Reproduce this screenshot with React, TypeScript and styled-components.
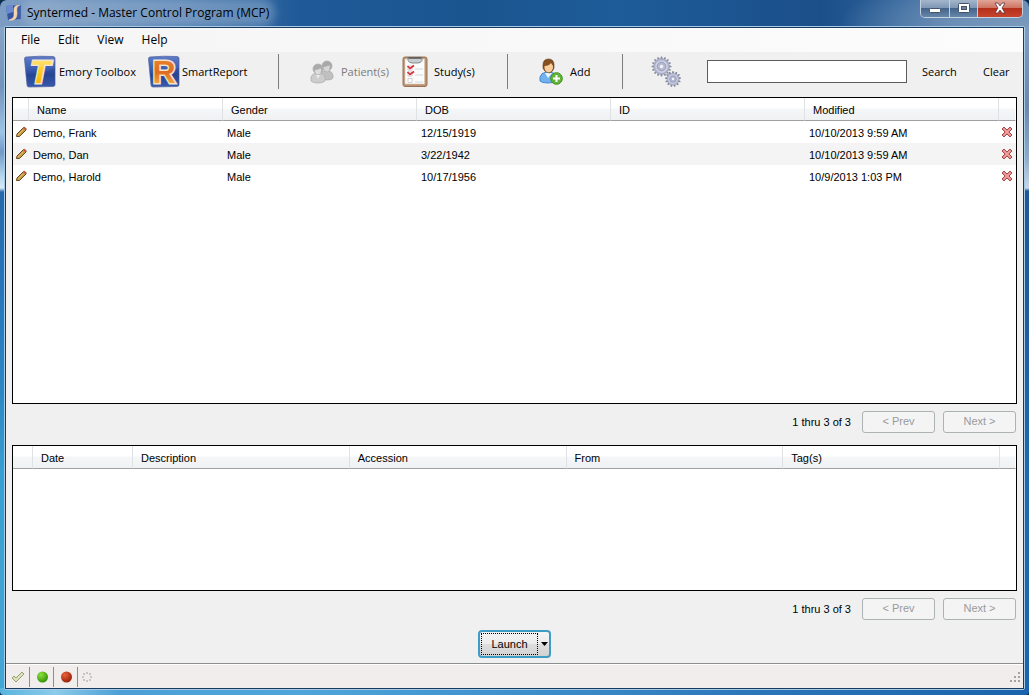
import React from "react";
import styled, { createGlobalStyle } from "styled-components";

const GlobalStyle = createGlobalStyle`
  * { box-sizing: border-box; }
  body { margin: 0; background: #0c2c50; }
  button, input { font: inherit; color: inherit; }
`;

const uiFont = `"Open Sans", "Noto Sans", sans-serif`;
const gridFont = `"Liberation Sans", Arial, sans-serif`;

const Frame = styled.div`
  min-height: 100vh;
  display: flex;
  flex-direction: column;
  overflow: hidden;
  border-radius: 7px 7px 4px 4px;
  color: #000;
  font-family: ${uiFont};
  font-size: 11px;
  line-height: 16px;
  background:
    linear-gradient(90deg, #58b4de 0, #8ccbea 55px, #4b9fd6 120px, #4fa5da 300px, #3d8fcc 520px, #2a74b8 75%, #1b63ac 100%) bottom / 100% 7px no-repeat,
    linear-gradient(180deg, #7f9dbf 0, #6b89ad 80px, #8fa9c8 130px, #c9d6e6 161px, #1f5796 164px, #215c9e 300px, #2069ae 450px, #1d63ab 100%) right 27px / 6px 100% no-repeat,
    linear-gradient(180deg, #88a4c6 0, #7393bb 60px, #9cc4e6 105px, #7199c6 125px, #b7d8ef 150px, #d6eaf7 161px, #2568ac 165px, #2574b8 250px, #2b86c4 360px, #37a0d2 450px, #45a8d6 100%) left 27px / 6px 100% no-repeat,
    radial-gradient(ellipse 190px 60px at 100% 100%, #7b9abd 0, #6c8fb6 40%, rgba(60, 106, 157, 0) 100%) top / 100% 27px no-repeat,
    linear-gradient(90deg, #7c9cc3 0, #6d91bc 60px, #4d7bb0 180px, #1f5997 300px, #1b5590 480px, #1d5c98 620px, #1b4f8a 820px, #2f6299 900px, #5f86b0 100%);
`;

const TitleBar = styled.header`
  height: 26px;
  display: flex;
  align-items: flex-start;
  padding: 0 6px;
`;

const TitleText = styled.h1`
  margin: 5px 0 0 5px;
  flex: 1;
  font-size: 12px;
  font-weight: 400;
  line-height: 16px;

  span {
    background: rgba(178, 199, 222, 0.38);
    box-shadow: 0 0 8px 6px rgba(178, 199, 222, 0.38);
    border-radius: 8px;
  }
`;

const TitleIcon = styled.svg`
  margin-top: 5px;
`;

const WindowControls = styled.div`
  display: flex;
  height: 18px;
  border: 1px solid #c3d1e0;
  border-top: 0;
  border-radius: 0 0 5px 5px;
  overflow: hidden;
`;

const ControlButton = styled.button<{ $close?: boolean }>`
  width: ${(p) => (p.$close ? 45 : 28)}px;
  padding: 0 0 2px;
  border: 0;
  display: flex;
  justify-content: center;
  align-items: center;
  background: ${(p) =>
    p.$close
      ? "linear-gradient(180deg, #e0a597 0, #cf7563 45%, #b5301b 50%, #c8442c 100%)"
      : "linear-gradient(180deg, #a4b6cb 0, #7f98b5 45%, #45648a 50%, #6686aa 100%)"};

  & + & {
    border-left: 1px solid #c3d1e0;
  }
`;

const Client = styled.div`
  flex: 1;
  display: flex;
  margin: 0 4px 5px;
  border: 1px solid #a9cbe6;
  border-radius: 2px;
`;

const ClientBody = styled.div`
  flex: 1;
  min-width: 0;
  display: flex;
  flex-direction: column;
  border: 1px solid #173a61;
  background: #f0f0f0;
`;

const MenuBar = styled.nav`
  height: 24px;
  display: flex;
  align-items: center;
  padding-left: 6px;
  background: linear-gradient(90deg, #f5f5f5, #fcfcfc);
`;

const MenuItem = styled.button`
  padding: 0 9px;
  border: 0;
  background: none;
  font-size: 12px;
`;

const Toolbar = styled.div`
  height: 45px;
  display: flex;
  align-items: center;
  padding: 0 0 6px 18px;
`;

const ToolButton = styled.button<{ $width: number; $gap: number }>`
  width: ${(p) => p.$width}px;
  flex: none;
  display: flex;
  align-items: center;
  gap: ${(p) => p.$gap}px;
  padding: 0;
  border: 0;
  background: none;
  white-space: nowrap;

  &:disabled { color: #7b7b7b; }
`;

const LogoSvg = styled.svg`
  flex: none;
  overflow: visible;
`;

const TextButton = styled.button<{ $width: number }>`
  width: ${(p) => p.$width}px;
  flex: none;
  padding: 0;
  border: 0;
  background: none;
  text-align: left;
`;

const ToolDivider = styled.span<{ $after: number }>`
  width: 1px;
  height: 35px;
  margin-right: ${(p) => p.$after}px;
  background: #7d7d7d;
`;

const SearchInput = styled.input`
  flex: 1;
  min-width: 60px;
  height: 23px;
  margin-right: 15px;
  padding: 0 4px;
  border: 1px solid #5c5c5c;
  background: #fff;
`;

const Panel = styled.section<{ $fill?: boolean }>`
  flex: ${(p) => (p.$fill ? "1 0 auto" : "none")};
  min-height: 146px;
  margin: 0 6px;
  border: 1px solid #000;
  background: #fff;
  font-family: ${gridFont};
`;

const Grid = styled.table`
  width: 100%;
  table-layout: fixed;
  border-collapse: separate;
  border-spacing: 0;

  th, td {
    text-align: left;
    font-weight: 400;
    white-space: nowrap;
  }
  th {
    height: 23px;
    padding: 1px 8px 0;
    border-right: 1px solid #dfe2e5;
    border-bottom: 1px solid #a0a0a0;
    background: linear-gradient(180deg, #fff 0, #fff 45%, #f5f6f8 50%, #eff1f3 100%);
  }
  th:last-child { border-right-color: #fff; }
  td {
    height: 22px;
    padding: 1px 4px 0;
  }
  tbody tr:nth-child(even) { background: #f4f4f4; }
`;

const IconCell = styled.td`
  && { padding: 0 2px; }
`;

const RowButton = styled.button`
  display: block;
  padding: 0;
  border: 0;
  background: none;

  svg { display: block; }
`;

const Pager = styled.div<{ $height: number }>`
  height: ${(p) => p.$height}px;
  display: flex;
  justify-content: flex-end;
  align-items: flex-start;
  gap: 8px;
  padding: 7px 7px 0;
  font-family: ${gridFont};
  line-height: 22px;

  span { margin-right: 3px; }
`;

const PagerButton = styled.button`
  width: 73px;
  height: 22px;
  padding: 0 0 2px;
  border: 1px solid #adb2b5;
  border-radius: 3px;
  background: #f4f4f4;
  line-height: 16px;

  &:disabled { color: #9a9a9a; }
`;

const LaunchRow = styled.div`
  display: flex;
  justify-content: center;
  padding-bottom: 5px;
  font-family: ${gridFont};
`;

const SplitButton = styled.div`
  width: 73px;
  height: 28px;
  display: flex;
  padding: 1px;
  border: 2px solid #3f9cc4;
  border-radius: 4px;
  background: linear-gradient(180deg, #f4f4f4 0, #ececec 48%, #dedede 52%, #d2d2d2 100%);
`;

const LaunchButton = styled.button`
  flex: 1;
  padding: 0;
  border: 1px dotted #000;
  background: none;
`;

const DropButton = styled.button`
  width: 10px;
  padding: 0 0 0 2px;
  border: 0;
  background: none;
  display: flex;
  justify-content: center;
  align-items: center;
`;

const StatusBar = styled.footer`
  height: 25px;
  display: flex;
  align-items: center;
  padding: 1px 2px 0 0;
  border-top: 1px solid #8b8f90;
  box-shadow: inset 0 1px #fff;
  background: #f0edec;
`;

const StatusItem = styled.span<{ $last?: boolean }>`
  width: ${(p) => (p.$last ? 18 : 24)}px;
  height: 20px;
  display: flex;
  justify-content: center;
  align-items: center;
  border-right: ${(p) => (p.$last ? "0" : "1px solid #8e8e8e")};
`;

const StatusSpacer = styled.span`
  flex: 1;
`;

function AppIcon() {
  return (
    <TitleIcon width="16" height="16" viewBox="0 0 16 16" aria-hidden="true">
      <path d="M0 1 15 0v14L2 15z" fill="#3554a0" />
      <path d="M0 1 7 0v7L1 9z" fill="#6b8bd0" />
      <path d="M14 0C7 0 8 4 8 8s0 5-5 7c7 1 8-3 8-7s-1-6 3-8z" fill="#f8d5a8" stroke="#f8d5a8" strokeWidth=".6" />
    </TitleIcon>
  );
}

function LogoTile({ letter, colors, id }: { letter: string; colors: string[]; id: string }) {
  return (
    <LogoSvg width="32" height="32" viewBox="0 0 32 32" aria-hidden="true">
      <defs>
        <linearGradient id={id + "b"} x1="0" y1="0" x2="0" y2="1">
          <stop offset="0" stopColor="#5f7cc6" />
          <stop offset=".4" stopColor="#3c5db2" />
          <stop offset=".6" stopColor="#2b4899" />
          <stop offset="1" stopColor="#4567bd" />
        </linearGradient>
        <linearGradient id={id + "l"} x1="0" y1="0" x2="0" y2="1">
          <stop offset="0" stopColor={colors[0]} />
          <stop offset=".5" stopColor={colors[1]} />
          <stop offset="1" stopColor={colors[2]} />
        </linearGradient>
      </defs>
      <path d="M2 1Q16-.3 29 .500q2 0 2 2v26q0 2-2 2L5 31q-2 0-2-2L.500 3Q.500 1 2 1z" fill={`url(#${id}b)`} stroke="#4a5f9c" strokeWidth=".7" />
      <path d="M2 18Q16 19 31 12v17q0 1-1 1H5q-1 0-1-1z" fill="#1f3b88" opacity=".3" />
      <text
        x="16"
        y="27"
        textAnchor="middle"
        fontFamily="Liberation Sans, Arial, sans-serif"
        fontSize="32"
        fontWeight="700"
        fontStyle={letter === "T" ? "italic" : "normal"}
        fill={`url(#${id}l)`}
        stroke="#f1e3cc"
        strokeWidth="3"
        paintOrder="stroke"
      >
        {letter}
      </text>
    </LogoSvg>
  );
}

function PatientsIcon() {
  return (
    <svg width="24" height="24" viewBox="0 0 24 24" aria-hidden="true">
      <g stroke="#b0b0b0" strokeWidth=".8">
        <path d="M10 19v-4q1-4 5-4h3q4 0 5 4v3q-1 2-6 2z" fill="#c0c0c0" />
        <circle cx="17" cy="6" r="5" fill="#a8a8a8" />
        <path d="M13 7q4-1 7-2v3q0 4-3 4t-4-4z" fill="#d6d6d6" />
        <path d="M1 21v-4q1-3 5-4h4q4 1 5 4v4q-2 2-7 2t-7-2z" fill="#cdcdcd" />
        <circle cx="8" cy="9" r="5" fill="#ababab" />
        <path d="M4.500 10q4-1 7-2v3q0 4-3.500 4t-3.500-4z" fill="#dcdcdc" />
      </g>
      <path d="m6 15 2 4 2-4z" fill="#ececec" />
    </svg>
  );
}

function StudyIcon() {
  return (
    <svg width="26" height="32" viewBox="0 0 26 32" aria-hidden="true">
      <rect x="1" y="1" width="24" height="29.500" rx="2" fill="#bd9270" stroke="#9b7253" />
      <rect x="3" y="3" width="19.500" height="25" fill="#fbfbfb" stroke="#d8cabb" strokeWidth=".6" />
      <path d="M6 1.500h14v3q-1 2.500-4 2.500h-6Q7 7 6 4.500z" fill="#c9cccd" stroke="#74787a" strokeWidth=".8" />
      <path d="M6.500 2h13" stroke="#505456" strokeWidth="1.500" />
      <path d="M13 13h8M13 19h8M13 26h8" stroke="#d5d8da" />
      <path d="M6 10h4v4H6zM6 16h4v4H6zM6 22.500h4v4H6z" fill="#fff" stroke="#c4c4c4" strokeWidth=".8" />
      <path d="m5.500 10 2.500 2.500 4-3M5.500 16l2.500 2.500 4-3" fill="none" stroke="#d92b35" strokeWidth="1.600" />
    </svg>
  );
}

function AddIcon() {
  return (
    <svg width="24" height="28" viewBox="0 0 24 28" aria-hidden="true">
      <path d="M1 23v-4q1-4 6-5h4q6 1 7 5v4q-3 2-9 2t-8-2z" fill="#72b1ee" stroke="#4b8ad0" />
      <path d="m6 15 3 5 4-5z" fill="#eaf5ff" />
      <path d="M4 7q0-6 5.500-6T15 7v3q-1 4-5 5-5-1-6-5z" fill="#85501f" stroke="#65380f" strokeWidth=".6" />
      <path d="M5.500 8q4.500 0 6.500-3l2 3v2q-1 4-4.500 4.500-3.500-.500-4-4.500z" fill="#f8cf9c" />
      <circle cx="17.500" cy="20.500" r="5.800" fill="#62b534" stroke="#3f8e1c" />
      <path d="M17.500 17v7M14 20.500h7" stroke="#fff" strokeWidth="2" />
    </svg>
  );
}

function Gear({ cx, cy, r, teeth }: { cx: number; cy: number; r: number; teeth: number }) {
  const step = 360 / teeth;
  return (
    <g transform={`translate(${cx} ${cy})`}>
      {Array.from({ length: teeth }, (_, i) => (
        <path key={i} d={`M-1.300 ${-r + 1}L-.500 ${-r - 1.5}h1l.8 2.500z`} fill="#8489a0" transform={`rotate(${i * step})`} />
      ))}
      <circle r={r - 0.5} fill="#a9aec5" />
      <circle r={r * 0.75} fill="#cdd0e4" />
      <circle r={r * 0.5} fill="#b4b8d2" stroke="#9a9fba" strokeWidth="1" />
      <circle r={r * 0.26} fill="#f2f2f6" stroke="#a3a8c0" strokeWidth=".6" />
    </g>
  );
}

function GearsIcon() {
  return (
    <svg width="32" height="32" viewBox="0 0 32 32" aria-hidden="true">
      <Gear cx={10.5} cy={10.5} r={8.5} teeth={16} />
      <Gear cx={22} cy={23} r={6.5} teeth={13} />
    </svg>
  );
}

function PencilIcon() {
  return (
    <svg width="12" height="12" viewBox="0 0 12 12" aria-hidden="true">
      <path d="M1.500 10.500 2 8l6.500-6.500q1-.500 2 .500t.500 2L4.500 10.500z" fill="#c89a45" stroke="#664a20" />
      <path d="M3 9l5-5" stroke="#e3bd6c" />
      <path d="m8 2 1-1 2 2-1 1z" fill="#d9523c" />
    </svg>
  );
}

function DeleteIcon() {
  return (
    <svg width="12" height="12" viewBox="0 0 12 12" aria-hidden="true">
      <path
        d="m3 1 3 3 3-3 2 2-3 3 3 3-2 2-3-3-3 3-2-2 3-3-3-3z"
        fill="#e98f8f"
        stroke="#a84848"
        strokeLinejoin="round"
      />
      <path d="M3 3l6 6M9 3 3 9" stroke="#eea09c" />
    </svg>
  );
}

function CheckIcon() {
  return (
    <svg width="14" height="14" viewBox="0 0 14 14" aria-hidden="true">
      <path d="m1 8 2-2 2 2 6-6 2 2-8 8z" fill="#dbe3b4" stroke="#99a276" strokeLinejoin="round" />
    </svg>
  );
}

function Ball({ id, light, dark }: { id: string; light: string; dark: string }) {
  return (
    <svg width="12" height="12" viewBox="0 0 12 12" aria-hidden="true">
      <radialGradient id={id} cx=".35" cy=".3" r=".75">
        <stop offset="0" stopColor={light} />
        <stop offset="1" stopColor={dark} />
      </radialGradient>
      <circle cx="6.500" cy="6" r="5.500" fill={`url(#${id})`} />
    </svg>
  );
}

function SpinnerIcon() {
  return (
    <svg width="12" height="12" viewBox="0 0 12 12" aria-hidden="true">
      <path
        d="M5 1h2v2H5zM8 2h2v2H8zM9 5h2v2H9zM8 8h2v2H8zM5 9h2v2H5zM2 8h2v2H2zM1 5h2v2H1zM2 2h2v2H2z"
        fill="#c8c6c5"
      />
    </svg>
  );
}

function GripIcon() {
  return (
    <svg width="12" height="12" viewBox="0 0 12 12" aria-hidden="true">
      <path d="M9 1h2v2H9zM5 5h2v2H5zM9 5h2v2H9zM1 9h2v2H1zM5 9h2v2H5zM9 9h2v2H9z" fill="#a3a3a3" />
    </svg>
  );
}

const patients = [
  { name: "Demo, Frank", gender: "Male", dob: "12/15/1919", id: "", modified: "10/10/2013 9:59 AM" },
  { name: "Demo, Dan", gender: "Male", dob: "3/22/1942", id: "", modified: "10/10/2013 9:59 AM" },
  { name: "Demo, Harold", gender: "Male", dob: "10/17/1956", id: "", modified: "10/9/2013 1:03 PM" },
];

function PageControls({ height }: { height: number }) {
  return (
    <Pager $height={height}>
      <span>1 thru 3 of 3</span>
      <PagerButton disabled>&lt; Prev</PagerButton>
      <PagerButton disabled>Next &gt;</PagerButton>
    </Pager>
  );
}

export default function App() {
  return (
    <>
      <GlobalStyle />
      <Frame>
        <TitleBar>
          <AppIcon />
          <TitleText>
            <span>Syntermed - Master Control Program (MCP)</span>
          </TitleText>
          <WindowControls>
            <ControlButton aria-label="Minimize">
              <svg width="14" height="14" viewBox="0 0 14 14">
                <rect x="1.500" y="7.500" width="11" height="4" rx="1" fill="#fff" stroke="#42536a" />
              </svg>
            </ControlButton>
            <ControlButton aria-label="Maximize">
              <svg width="14" height="14" viewBox="0 0 14 14">
                <rect x="1.500" y="2.500" width="11" height="9" rx="1" fill="#fff" stroke="#42536a" />
                <rect x="4.500" y="5.500" width="5" height="3" fill="#6c84a2" stroke="#42536a" />
              </svg>
            </ControlButton>
            <ControlButton $close aria-label="Close">
              <svg width="14" height="14" viewBox="0 0 14 14">
                <path d="M2 2h3l2 3 2-3h3L9 7l3 5H9L7 9l-2 3H2l3-5z" fill="#fff" stroke="#5d3540" strokeWidth=".8" />
              </svg>
            </ControlButton>
          </WindowControls>
        </TitleBar>
        <Client>
          <ClientBody>
            <MenuBar>
              {["File", "Edit", "View", "Help"].map((label) => (
                <MenuItem key={label}>{label}</MenuItem>
              ))}
            </MenuBar>
            <Toolbar>
              <ToolButton $width={124} $gap={3}>
                <LogoTile id="toolbox" letter="T" colors={["#fff0a0", "#ffc91c", "#f7a800"]} />
                Emory Toolbox
              </ToolButton>
              <ToolButton $width={130} $gap={2}>
                <LogoTile id="report" letter="R" colors={["#ee8a30", "#dd6c20", "#ffc04a"]} />
                SmartReport
              </ToolButton>
              <ToolDivider $after={31} />
              <ToolButton $width={92} $gap={7} disabled>
                <PatientsIcon />
                Patient(s)
              </ToolButton>
              <ToolButton $width={105} $gap={6}>
                <StudyIcon />
                Study(s)
              </ToolButton>
              <ToolDivider $after={31} />
              <ToolButton $width={83} $gap={7}>
                <AddIcon />
                Add
              </ToolButton>
              <ToolDivider $after={28} />
              <ToolButton $width={56} $gap={0} aria-label="Settings">
                <GearsIcon />
              </ToolButton>
              <SearchInput type="text" aria-label="Search patients" />
              <TextButton $width={61}>Search</TextButton>
              <TextButton $width={40}>Clear</TextButton>
            </Toolbar>
            <Panel $fill>
              <Grid>
                <colgroup>
                  <col width="16" />
                  <col />
                  <col />
                  <col />
                  <col />
                  <col />
                  <col width="17" />
                </colgroup>
                <thead>
                  <tr>
                    <th />
                    <th>Name</th>
                    <th>Gender</th>
                    <th>DOB</th>
                    <th>ID</th>
                    <th>Modified</th>
                    <th />
                  </tr>
                </thead>
                <tbody>
                  {patients.map((p) => (
                    <tr key={p.name}>
                      <IconCell>
                        <RowButton aria-label={`Edit ${p.name}`}>
                          <PencilIcon />
                        </RowButton>
                      </IconCell>
                      <td>{p.name}</td>
                      <td>{p.gender}</td>
                      <td>{p.dob}</td>
                      <td>{p.id}</td>
                      <td>{p.modified}</td>
                      <IconCell>
                        <RowButton aria-label={`Delete ${p.name}`}>
                          <DeleteIcon />
                        </RowButton>
                      </IconCell>
                    </tr>
                  ))}
                </tbody>
              </Grid>
            </Panel>
            <PageControls height={41} />
            <Panel>
              <Grid>
                <colgroup>
                  <col width="20" />
                  <col width="100" />
                  <col />
                  <col />
                  <col />
                  <col />
                  <col width="16" />
                </colgroup>
                <thead>
                  <tr>
                    <th />
                    <th>Date</th>
                    <th>Description</th>
                    <th>Accession</th>
                    <th>From</th>
                    <th>Tag(s)</th>
                    <th />
                  </tr>
                </thead>
              </Grid>
            </Panel>
            <PageControls height={39} />
            <LaunchRow>
              <SplitButton>
                <LaunchButton>Launch</LaunchButton>
                <DropButton aria-label="Launch options">
                  <svg width="7" height="4" viewBox="0 0 7 4">
                    <path d="M0 0h7L3.500 4z" />
                  </svg>
                </DropButton>
              </SplitButton>
            </LaunchRow>
            <StatusBar>
              <StatusItem>
                <CheckIcon />
              </StatusItem>
              <StatusItem>
                <Ball id="ready" light="#8fe23c" dark="#2f8f08" />
              </StatusItem>
              <StatusItem>
                <Ball id="stopped" light="#e8633a" dark="#961d06" />
              </StatusItem>
              <StatusItem $last>
                <SpinnerIcon />
              </StatusItem>
              <StatusSpacer />
              <GripIcon />
            </StatusBar>
          </ClientBody>
        </Client>
      </Frame>
    </>
  );
}
